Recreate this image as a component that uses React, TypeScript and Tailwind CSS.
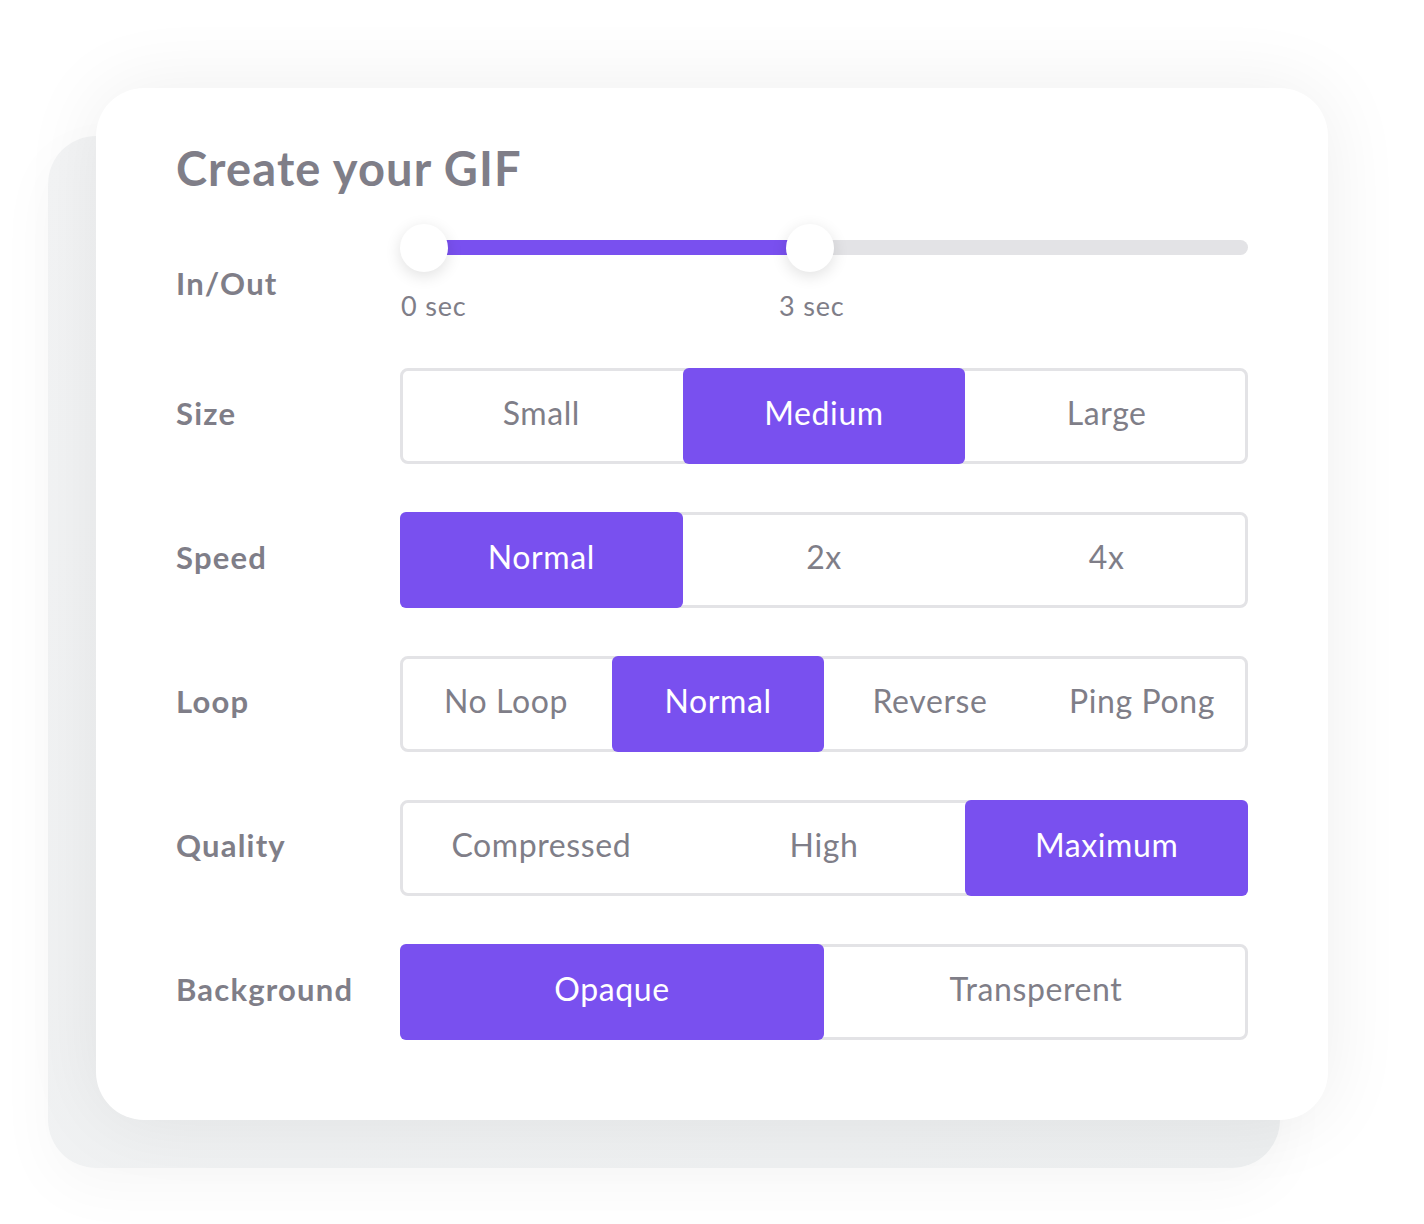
import React from "react";

const PURPLE = "bg-[#7950ef]";

type SegProps = { options: string[]; selected: number };

function Segmented({ options, selected }: SegProps) {
  return (
    <div className="relative flex h-24 w-[848px]">
      <div className="pointer-events-none absolute inset-0 rounded-lg border-[3px] border-[#e3e3e6]" />
      {options.map((o, i) => (
        <div
          key={o}
          className={
            i === selected
              ? `relative flex flex-1 items-center justify-center rounded-md ${PURPLE} text-white`
              : "relative flex flex-1 items-center justify-center text-[#7f7e88]"
          }
        >
          <span className="mb-[6px] text-[32px] leading-none tracking-[0.6px]">{o}</span>
        </div>
      ))}
    </div>
  );
}

function Row({ label, children }: { label: string; children: React.ReactNode }) {
  return (
    <div className="flex items-center">
      <div className="w-[224px] pb-[6px] text-[31px] font-bold leading-none tracking-[1.2px] text-[#7f7e88]">{label}</div>
      {children}
    </div>
  );
}

export default function App() {
  return (
    <div
      className="relative h-[1224px] w-[1424px] overflow-hidden bg-white"
      style={{ fontFamily: "Lato, 'Open Sans', sans-serif" }}
    >
      <div className="absolute left-[48px] top-[136px] h-[1032px] w-[1232px] rounded-[48px] bg-gradient-to-br from-[#f3f4f5] to-[#edeff0] shadow-[0_20px_60px_rgba(0,0,0,0.035)]" />
      <div className="relative ml-[96px] mt-[88px] h-[1032px] w-[1232px] rounded-[48px] bg-white px-20 pt-[52px] shadow-[0_0_80px_rgba(0,0,0,0.07)]">
        <h1 className="h-[56px] text-[47px] font-bold leading-[56px] tracking-[1.1px] text-[#7f7e88]">Create your GIF</h1>

        <div className="mt-[28px] flex">
          <div className="w-[224px] pt-[41px] text-[31px] font-bold leading-[36px] tracking-[1.2px] text-[#7f7e88]">In/Out</div>
          <div className="w-[848px]">
            <div className="relative h-12">
              <div className="absolute left-[24px] right-0 top-[16px] h-[15px] rounded-full bg-[#e3e3e6]" />
              <div className={`absolute left-[24px] top-[16px] h-[15px] w-[386px] ${PURPLE}`} />
              <div className="absolute left-0 top-0 h-12 w-12 rounded-full bg-white shadow-[0_4px_16px_rgba(0,0,0,0.12)]" />
              <div className="absolute left-[386px] top-0 h-12 w-12 rounded-full bg-white shadow-[0_4px_16px_rgba(0,0,0,0.12)]" />
            </div>
            <div className="relative mt-[18px] h-8 text-[27px] leading-[32px] tracking-[0.8px] text-[#7f7e88]">
              <span className="absolute left-[1px] top-0">0 sec</span>
              <span className="absolute left-[379px] top-0">3 sec</span>
            </div>
          </div>
        </div>

        <div className="mt-[46px] flex flex-col gap-12">
          <Row label="Size">
            <Segmented options={["Small", "Medium", "Large"]} selected={1} />
          </Row>
          <Row label="Speed">
            <Segmented options={["Normal", "2x", "4x"]} selected={0} />
          </Row>
          <Row label="Loop">
            <Segmented options={["No Loop", "Normal", "Reverse", "Ping Pong"]} selected={1} />
          </Row>
          <Row label="Quality">
            <Segmented options={["Compressed", "High", "Maximum"]} selected={2} />
          </Row>
          <Row label="Background">
            <Segmented options={["Opaque", "Transperent"]} selected={0} />
          </Row>
        </div>
      </div>
    </div>
  );
}
